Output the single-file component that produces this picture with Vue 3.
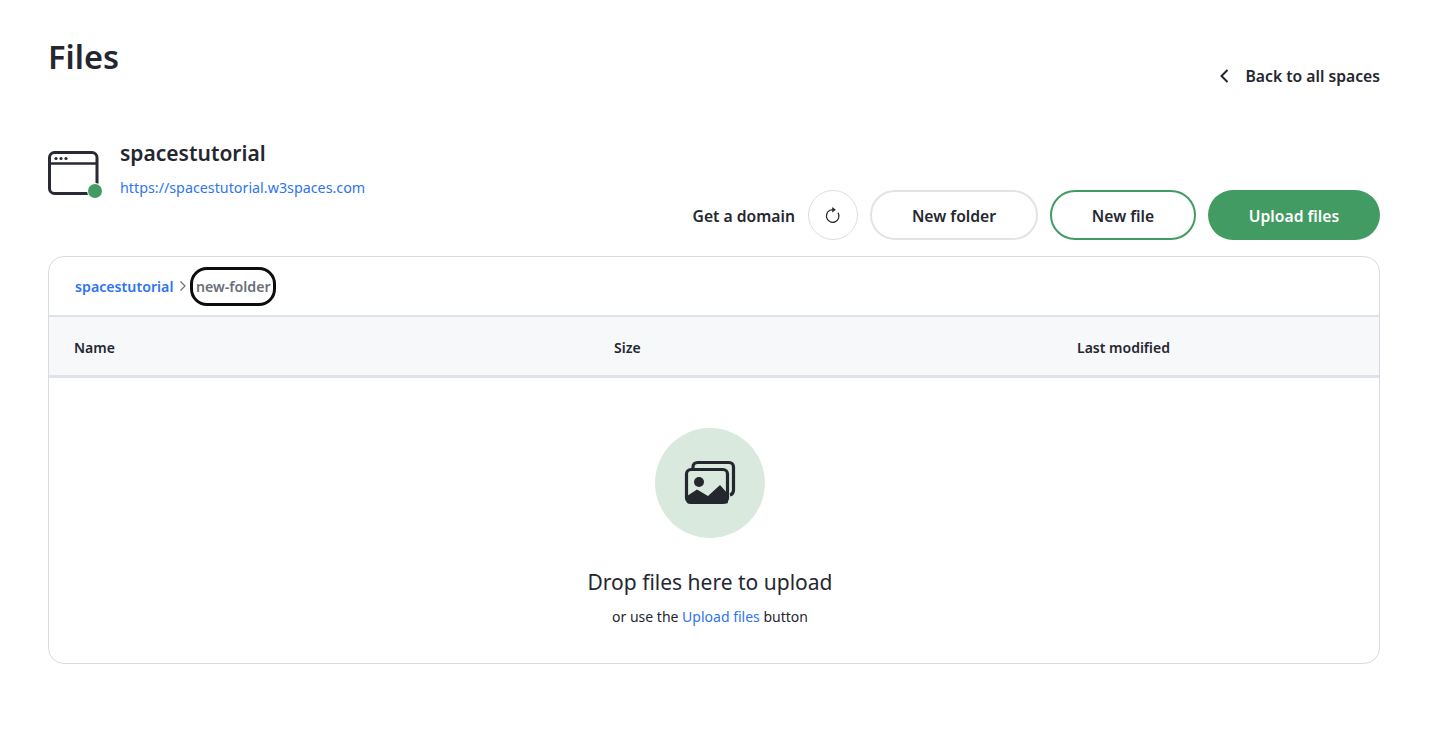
<script setup>
const columns = [
  { label: 'Name', width: '540px' },
  { label: 'Size', width: '463px' },
  { label: 'Last modified', width: 'auto' }
];
</script>

<template>
  <div class="page">
    <header class="top">
      <h1>Files</h1>
      <a class="back">
        <svg width="12" height="16" viewBox="0 0 12 16"><path d="M9.500 2 3.500 8l6 6" fill="none" stroke="#25272f" stroke-width="2"/></svg>
        <span>Back to all spaces</span>
      </a>
    </header>

    <section class="space">
      <div class="space-info">
        <div class="site-icon">
          <svg width="52" height="46" viewBox="0 0 52 46">
            <rect x="1.500" y="1.500" width="47.500" height="41" rx="5" fill="none" stroke="#282a35" stroke-width="3"/>
            <path d="M1.500 12.500h47.500" stroke="#282a35" stroke-width="2.500"/>
            <circle cx="8" cy="7.500" r="1.600" fill="#282a35"/>
            <circle cx="13" cy="7.500" r="1.600" fill="#282a35"/>
            <circle cx="18" cy="7.500" r="1.600" fill="#282a35"/>
          </svg>
          <span class="status"></span>
        </div>
        <div class="space-text">
          <div class="space-name">spacestutorial</div>
          <a class="space-url">https://spacestutorial.w3spaces.com</a>
        </div>
      </div>
      <div class="actions">
        <span class="domain">Get a domain</span>
        <button class="round">
          <svg width="18" height="18" viewBox="0 0 18 18">
            <path d="M14 6.600A6.300 6.300 0 1 1 8.700 3.700" fill="none" stroke="#25272f" stroke-width="1.200"/>
            <path d="M8.200 1 11.800 3.700 8.200 6.400z" fill="#25272f"/>
          </svg>
        </button>
        <button class="btn folder">New folder</button>
        <button class="btn file">New file</button>
        <button class="btn upload">Upload files</button>
      </div>
    </section>

    <section class="card">
      <div class="crumbs">
        <a class="crumb-link">spacestutorial</a>
        <svg width="8" height="12" viewBox="0 0 8 12"><path d="M1.500 1.500 6 6l-4.500 4.500" fill="none" stroke="#6b6f7a" stroke-width="1.200"/></svg>
        <span class="crumb-current">new-folder</span>
      </div>
      <div class="thead">
        <div v-for="col in columns" :key="col.label" class="th" :style="{ width: col.width }">{{ col.label }}</div>
      </div>
      <div class="empty">
        <div class="empty-icon">
          <svg width="52" height="46" viewBox="0 0 52 46">
            <path d="M9 8V7c0-2.800 2-4.500 4.500-4.500H45c2.800 0 4.500 2 4.500 4.500v23c0 2.800-1.500 4.500-3.500 5" fill="none" stroke="#25272f" stroke-width="3.200"/>
            <rect x="2.500" y="9.500" width="41" height="33" rx="4.500" fill="none" stroke="#25272f" stroke-width="3.200"/>
            <circle cx="15" cy="22" r="5" fill="#25272f"/>
            <path d="M3 42V36l10-6.500 11 6.500 12-11 8 9v8a1.500 1.500 0 0 1-1.500 1.500H4.500A1.500 1.500 0 0 1 3 42z" fill="#25272f"/>
          </svg>
        </div>
        <div class="empty-title">Drop files here to upload</div>
        <div class="empty-sub">or use the <a>Upload files</a> button</div>
      </div>
    </section>
  </div>
</template>

<style>
body {
  background: #fff;
}
</style>

<style scoped>
.page {
  padding: 0 56px 69px 48px;
  font-family: "Noto Sans", "Liberation Sans", sans-serif;
  color: #25272f;
}

.top {
  display: flex;
  justify-content: space-between;
  height: 132px;
}

h1 {
  margin: 36px 0 0;
  font-size: 32.500px;
  line-height: 42px;
  font-weight: 600;
}

.back {
  display: flex;
  align-items: center;
  gap: 16px;
  height: 24px;
  margin-top: 64px;
  margin-left: auto;
  font-size: 15.700px;
  font-weight: 600;
}

.space {
  display: flex;
  justify-content: space-between;
  align-items: flex-start;
  height: 124px;
}

.space-info {
  display: flex;
  gap: 20px;
}

.site-icon {
  position: relative;
  width: 52px;
  height: 46px;
  margin-top: 19px;
}

.status {
  position: absolute;
  right: -2px;
  bottom: -1px;
  width: 14px;
  height: 14px;
  border-radius: 50%;
  background: #429b63;
  box-shadow: 0 0 0 1px #fff;
}

.space-text {
  display: flex;
  flex-direction: column;
  margin-top: 7px;
}

.space-name {
  font-size: 21px;
  line-height: 28px;
  font-weight: 600;
}

.space-url {
  margin-top: 11px;
  font-size: 14.300px;
  line-height: 20px;
  color: #2f74f0;
}

.actions {
  display: flex;
  align-items: center;
  gap: 12px;
  margin-top: 58px;
}

.domain {
  padding-top: 1px;
  font-size: 15.700px;
  font-weight: 600;
  margin-right: 1px;
}

button {
  font-family: inherit;
  cursor: pointer;
}

.round {
  display: flex;
  align-items: center;
  justify-content: center;
  width: 50px;
  height: 50px;
  padding: 0;
  border: 1px solid #dcdee3;
  border-radius: 50%;
  background: #fff;
}

.btn {
  height: 50px;
  padding: 1px 0 0;
  border-radius: 25px;
  font-size: 15.700px;
  font-weight: 600;
  background: #fff;
  color: #25272f;
}

.folder {
  width: 168px;
  border: 2px solid #e1e3e6;
}

.file {
  width: 146px;
  border: 2px solid #429b63;
}

.upload {
  width: 172px;
  border: 0;
  background: #429b63;
  color: #fff;
}

.card {
  height: 408px;
  box-sizing: border-box;
  border: 1px solid #d9dbe2;
  border-radius: 16px;
  overflow: hidden;
}

.crumbs {
  display: flex;
  align-items: center;
  gap: 6px;
  height: 58px;
  padding-left: 26px;
  font-size: 14.200px;
  font-weight: 600;
}

.crumb-link {
  color: #2f74f0;
}

.crumb-current {
  margin-left: -3px;
  padding: 7px 2.500px 6px;
  border: 3px solid #0d0d0d;
  border-radius: 17px;
  line-height: 20px;
  color: #6b6f7a;
}

.thead {
  display: flex;
  align-items: center;
  height: 58px;
  padding-left: 25px;
  background: #f7f8fa;
  border-top: 2px solid #dfe2e8;
  border-bottom: 3px solid #dfe2e8;
}

.th {
  padding-top: 2px;
  font-size: 14px;
  font-weight: 600;
}

.empty {
  display: flex;
  flex-direction: column;
  align-items: center;
  padding: 50px 8px 0 0;
}

.empty-icon {
  display: flex;
  align-items: center;
  justify-content: center;
  width: 110px;
  height: 110px;
  border-radius: 50%;
  background: #d9e9de;
}

.empty-title {
  margin-top: 30px;
  font-size: 21px;
  line-height: 28px;
}

.empty-sub {
  margin-top: 11px;
  font-size: 14px;
  line-height: 20px;
}

.empty-sub a {
  color: #2f74f0;
}
</style>
